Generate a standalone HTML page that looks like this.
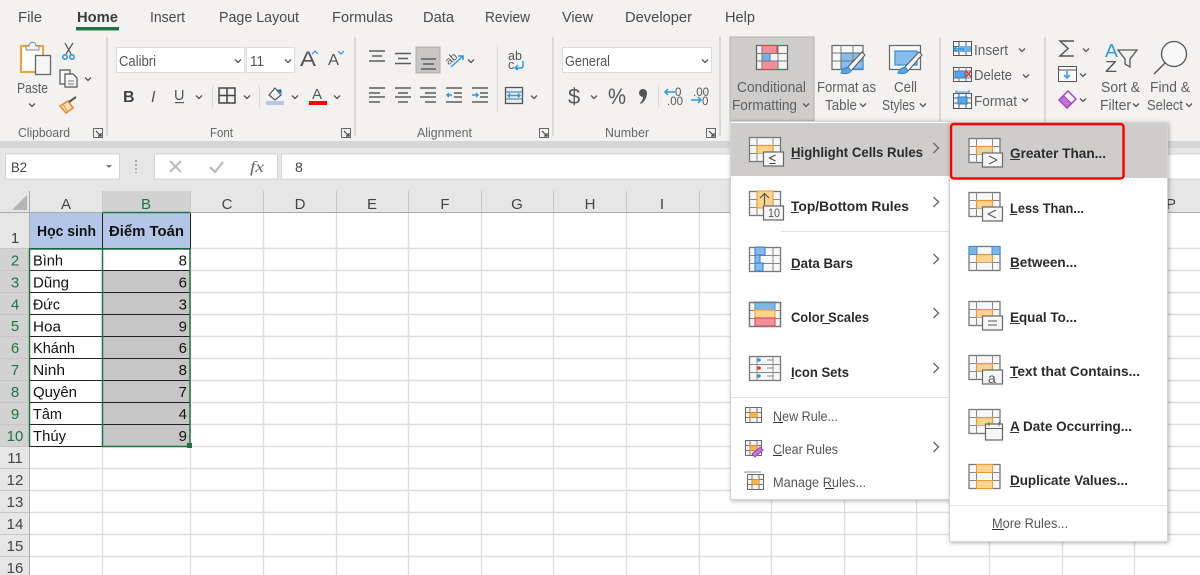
<!DOCTYPE html>
<html lang="vi"><head><meta charset="utf-8"><title>Excel Conditional Formatting</title>
<style>
html,body{margin:0;padding:0;width:1200px;height:575px;overflow:hidden;background:#fff}
svg{display:block}
text{font-family:"Liberation Sans","DejaVu Sans",sans-serif;fill:#4a4a4a;font-size:14.5px}
.r{fill:#5f5f5f;font-size:14.5px}
.l{fill:#666;font-size:13px}
.m{fill:#2b2b2b;font-size:14px;font-weight:bold}
.n{fill:#555;font-size:13.5px}
.c{fill:#111;font-size:15px}
.h{fill:#444;font-size:15px;text-anchor:middle}
.g{fill:#217346;font-size:15px;text-anchor:middle}
.i{fill:none;stroke:#5c5c5c;stroke-width:1.5}
.ch{fill:none;stroke:#555;stroke-width:1.3}
.blue{fill:none;stroke:#2b9be0;stroke-width:1.5}
</style></head><body>
<svg width="1200" height="575" viewBox="0 0 1200 575" xmlns="http://www.w3.org/2000/svg">
<defs>
<path id="v" class="ch" d="M-3,-1.5 L0,1.5 L3,-1.5"/>
<path id="gt" fill="none" stroke="#666" stroke-width="1.4" d="M-2.5,-5 L2.5,0 L-2.5,5"/>
<g id="grid"><rect x=".5" y=".5" width="31" height="24" fill="#f8f8f8" stroke="#777" stroke-width="1.3"/><path fill="none" stroke="#888" d="M8,0V25M24,0V25M0,8.5H32M0,16.5H32"/></g>
<g id="hl"><use href="#grid"/><rect x="8" y="8.5" width="16" height="8" fill="#fad38c"/><path fill="none" stroke="#ec9a35" stroke-width="1.3" d="M8,16V8.5H24V16"/></g>
<rect id="sub" x="0" y="0" width="20" height="14" fill="#f6f6f6" stroke="#666" stroke-width="1.2"/>
<g id="launch"><path fill="none" stroke="#666" d="M-4.5,4.5V-4.5H4.5V4.5H-4.5"/><path fill="none" stroke="#444" stroke-width="1.2" d="M-2,-2L3,3M3,0V3H0"/></g>
<g id="small"><rect x=".5" y=".5" width="16" height="15" fill="#f5f5f5" stroke="#666"/><path fill="none" stroke="#777" d="M5,0V16M12,0V16M0,5.500H17M0,10.500H17"/><rect x="5" y="5.500" width="7" height="5" fill="#f5b452" stroke="#e98f22" stroke-width=".7"/></g>
</defs>

<!-- page bands -->
<rect width="1200" height="141" fill="#f3f2f1"/>
<rect y="141" width="1200" height="7" fill="#d6d6d6"/>
<rect y="148" width="1200" height="43" fill="#e6e6e6"/>

<!-- tabs -->
<text x="18" y="22" textLength="24" lengthAdjust="spacingAndGlyphs">File</text>
<text x="77" y="22" textLength="41" lengthAdjust="spacingAndGlyphs" font-weight="bold" style="fill:#3d3d3d">Home</text>
<rect x="76" y="27" width="43" height="3.500" fill="#217346"/>
<text x="150" y="22" textLength="35" lengthAdjust="spacingAndGlyphs">Insert</text>
<text x="219" y="22" textLength="80" lengthAdjust="spacingAndGlyphs">Page Layout</text>
<text x="332" y="22" textLength="61" lengthAdjust="spacingAndGlyphs">Formulas</text>
<text x="423" y="22" textLength="31" lengthAdjust="spacingAndGlyphs">Data</text>
<text x="485" y="22" textLength="45" lengthAdjust="spacingAndGlyphs">Review</text>
<text x="562" y="22" textLength="31" lengthAdjust="spacingAndGlyphs">View</text>
<text x="625" y="22" textLength="67" lengthAdjust="spacingAndGlyphs">Developer</text>
<text x="725" y="22" textLength="30" lengthAdjust="spacingAndGlyphs">Help</text>

<!-- separators -->
<path stroke="#d2d1d0" stroke-width="1.6" fill="none" d="M107,37V136M355,37V136M553,37V136M720,37V136M940,37V136M1045,37V136"/>
<path stroke="#dcdbda" fill="none" d="M212.500,85V108M259.500,85V108M497.500,45V112M658.500,85V108"/>

<!-- clipboard group -->
<rect x="21" y="46" width="22" height="26" fill="#fff" stroke="#ee9f3e" stroke-width="2"/>
<path d="M26,50V46H29C29,41 36,41 36,46H39V50Z" fill="#f3f2f1" stroke="#8a8a8a"/>
<rect x="35.500" y="55.500" width="15" height="19" fill="#f6f6f6" stroke="#666" stroke-width="1.300"/>
<text class="r" x="17" y="93" textLength="31" lengthAdjust="spacingAndGlyphs">Paste</text>
<use href="#v" x="32" y="105"/>
<path fill="none" stroke="#555" stroke-width="1.200" d="M65,43L71,54M73,43L66,54"/>
<circle cx="65" cy="57" r="2.200" fill="none" stroke="#2b8fd8" stroke-width="1.500"/><circle cx="72" cy="57" r="2.200" fill="none" stroke="#2b8fd8" stroke-width="1.500"/>
<path fill="#f6f6f6" stroke="#555" stroke-width="1.200" d="M60,70H70V84H60Z"/>
<path fill="#f6f6f6" stroke="#555" stroke-width="1.200" d="M65,74H73L77,78V87H65Z"/><path stroke="#777" d="M68,81H74M68,84H74"/>
<use href="#v" x="88" y="79"/>
<path fill="#fbe3c4" stroke="#ed8b1f" stroke-width="1.600" d="M60,106L68,101L73,108L66,113Z"/><path stroke="#ed8b1f" stroke-width="1" d="M63,104L68,112"/>
<path fill="none" stroke="#555" stroke-width="2" d="M69,102L76,97"/>
<text class="l" x="18" y="137" textLength="52" lengthAdjust="spacingAndGlyphs">Clipboard</text>
<use href="#launch" x="98" y="133"/>

<!-- font group -->
<rect x="116.500" y="47.500" width="128" height="25" fill="#fff" stroke="#dcdcdc"/>
<rect x="246.500" y="47.500" width="48" height="25" fill="#fff" stroke="#dcdcdc"/>
<text x="119" y="66" textLength="37" lengthAdjust="spacingAndGlyphs" style="fill:#555">Calibri</text>
<text x="250" y="66" textLength="14" lengthAdjust="spacingAndGlyphs" style="fill:#555">11</text>
<use href="#v" x="238" y="61"/><use href="#v" x="288" y="61"/>
<text x="300" y="66" style="font-size:21px;fill:#555" textLength="16" lengthAdjust="spacingAndGlyphs">A</text>
<path fill="none" stroke="#2b9be0" stroke-width="1.200" d="M312,54L315,51L318,54"/>
<text x="328" y="65" style="font-size:16px;fill:#555" textLength="11" lengthAdjust="spacingAndGlyphs">A</text>
<path fill="none" stroke="#2b9be0" stroke-width="1.200" d="M338,51L341,54L344,51"/>
<text x="123" y="102" font-weight="bold" style="font-size:16px;fill:#444">B</text>
<text x="151" y="102" font-style="italic" style="font-size:16px;fill:#555">I</text>
<text x="174" y="100" style="font-size:14.500px;fill:#555">U</text><rect x="175" y="102" width="9" height="1.200" fill="#555"/>
<use href="#v" x="199" y="97"/>
<path fill="none" stroke="#444" stroke-width="1.500" d="M219,88H235V103H219ZM227,88V103M219,95.500H235"/>
<use href="#v" x="247" y="97"/>
<rect x="266" y="101" width="18" height="4" fill="#b4c7e7"/>
<path fill="#f6f6f6" stroke="#555" stroke-width="1.200" d="M269,95L275,88L281,95L275,100Z"/><path fill="#1f6fb5" d="M277,90l4,-1l1,5z"/>
<use href="#v" x="295" y="97"/>
<text x="312" y="99" style="font-size:15px;fill:#555">A</text>
<rect x="309" y="101" width="18" height="4" fill="#f00"/>
<use href="#v" x="337" y="97"/>
<text class="l" x="210" y="137" textLength="23" lengthAdjust="spacingAndGlyphs">Font</text>
<use href="#launch" x="346" y="133"/>

<!-- alignment -->
<rect x="416" y="47" width="24" height="26" fill="#c8c6c4" stroke="#b0aeac"/>
<path class="i" d="M369,51H385M372,56H382M369,61H385"/>
<path class="i" d="M395,53.500H411M398,58.500H408M395,63.500H411"/>
<path class="i" d="M421,59H436M423,64H434M421,69H436"/>
<path class="i" d="M369,88H385M369,93H380M369,97H385M369,102H380"/>
<path class="i" d="M395,88H411M398,93H408M395,97H411M398,102H408"/>
<path class="i" d="M420,88H436M425,93H436M420,97H436M425,102H436"/>
<path class="i" d="M446,88H462M454,93H462M454,97H462M446,102H462"/>
<path class="blue" d="M452,95H447M449,93L447,95L449,97"/>
<path class="i" d="M472,88H488M480,93H488M480,97H488M472,102H488"/>
<path class="blue" d="M472,95H478M476,93L478,95L476,97"/>
<text x="446" y="62" transform="rotate(-40 452 60)" style="font-size:11px;fill:#555">ab</text>
<path class="blue" d="M451,67L463,56M458,56H463V60"/>
<use href="#v" x="471" y="61"/>
<text x="508" y="60" style="font-size:12.500px;fill:#555">ab</text><text x="508" y="69" style="font-size:12.500px;fill:#555">c</text>
<path class="blue" d="M523,61V66C523,68 521,68 520,68H515M518,65L515,68L518,70"/>
<rect x="505.500" y="87.500" width="17" height="16" fill="#e3f1fb" stroke="#555" stroke-width="1.300"/>
<path stroke="#666" d="M505,92H522M505,99H522" fill="none"/>
<path class="blue" d="M508,95.500H520M510,93.500L508,95.500L510,97.500M518,93.500L520,95.500L518,97.500"/>
<use href="#v" x="534" y="97"/>
<text class="l" x="417" y="137" textLength="55" lengthAdjust="spacingAndGlyphs">Alignment</text>
<use href="#launch" x="544" y="133"/>

<!-- number -->
<rect x="562.500" y="47.500" width="149" height="25" fill="#fff" stroke="#dcdcdc"/>
<text x="565" y="66" textLength="45" lengthAdjust="spacingAndGlyphs" style="fill:#555">General</text>
<use href="#v" x="705" y="61"/>
<text x="568" y="104" style="font-size:22px;fill:#555">$</text>
<use href="#v" x="594" y="97"/>
<text x="608" y="104" style="font-size:22px;fill:#555" textLength="18" lengthAdjust="spacingAndGlyphs">%</text>
<path d="M639,93a4,4 0 1 1 8,0c0,4 -2,8 -6,11l-1,-1c2,-2 3,-4 3,-6c-2,0 -4,-2 -4,-4z" fill="#555"/>
<text x="675" y="96" style="font-size:11.500px;fill:#555">0</text><text x="667" y="105" style="font-size:11.500px;fill:#555">.00</text>
<path class="blue" d="M675,92H665M668,89L665,92L668,95"/>
<text x="693" y="96" style="font-size:11.500px;fill:#555">.00</text><text x="702" y="105" style="font-size:11.500px;fill:#555">0</text>
<path class="blue" d="M691,100H701M698,97L701,100L698,103"/>
<text class="l" x="605" y="137" textLength="44" lengthAdjust="spacingAndGlyphs">Number</text>
<use href="#launch" x="711" y="133"/>

<!-- conditional formatting button -->
<rect x="730" y="37" width="84" height="84" fill="#cfcdcc" stroke="#b5b3b1"/>
<rect x="756.500" y="45.500" width="31" height="24" fill="#f4f4f4" stroke="#666" stroke-width="1.300"/>
<rect x="762" y="45.500" width="15" height="8" fill="#f58e99" stroke="#e03a3a"/>
<rect x="762" y="53.500" width="8" height="7.500" fill="#71b2eb" stroke="#2b80c8"/>
<rect x="762" y="61" width="16" height="8.500" fill="#f58e99" stroke="#e03a3a"/>
<path fill="none" stroke="#777" d="M762,45V69M778,45V69M756,53.500H788M756,61H788"/>
<text class="r" x="737" y="92" textLength="69" lengthAdjust="spacingAndGlyphs">Conditional</text>
<text class="r" x="732" y="110" textLength="65" lengthAdjust="spacingAndGlyphs">Formatting</text>
<use href="#v" x="806" y="105"/>

<!-- format as table / cell styles -->
<rect x="832" y="45.500" width="31" height="24" fill="#f8f8f8" stroke="#666" stroke-width="1.200"/>
<path d="M841,53H863V69H841Z" fill="#86bcee" stroke="#3c8ed6" stroke-width="1.200"/>
<path fill="none" stroke="#777" d="M841,45V69M853,45V69M832,53H863M832,61H863"/>
<path fill="#f6f6f6" stroke="#555" d="M847,68L862,52L865,55L851,71Z"/><path fill="#5aa5e6" stroke="#2b80c8" d="M841,73c2,-5 5,-6 8,-5l2,3c-2,3 -6,3 -10,2z"/>
<text class="r" x="817" y="92" textLength="59" lengthAdjust="spacingAndGlyphs">Format as</text>
<text class="r" x="825" y="110" textLength="32" lengthAdjust="spacingAndGlyphs">Table</text>
<use href="#v" x="863" y="105"/>
<rect x="889.500" y="45.500" width="31" height="24" fill="#f8f8f8" stroke="#666" stroke-width="1.200"/>
<rect x="895" y="51" width="22" height="14" fill="#86bcee" stroke="#3c8ed6" stroke-width="1.200"/>
<path fill="#f6f6f6" stroke="#555" d="M904,68L919,52L922,55L908,71Z"/><path fill="#5aa5e6" stroke="#2b80c8" d="M898,73c2,-5 5,-6 8,-5l2,3c-2,3 -6,3 -10,2z"/>
<text class="r" x="894" y="92" textLength="23" lengthAdjust="spacingAndGlyphs">Cell</text>
<text class="r" x="882" y="110" textLength="33" lengthAdjust="spacingAndGlyphs">Styles</text>
<use href="#v" x="923" y="105"/>

<!-- insert delete format -->
<g fill="none" stroke="#555">
<rect x="953.500" y="41.500" width="18" height="14" fill="#f8f8f8"/><path d="M959,41V55M966,41V55M953,46.500H972M953,51H972"/>
<rect x="953.500" y="67.500" width="18" height="14" fill="#f8f8f8"/><path d="M959,67V81M966,67V81M953,71H972M953,78H972" stroke="#777"/>
<rect x="953.500" y="93.500" width="18" height="15" fill="#f8f8f8"/><path d="M959,93V108M966,93V108M953,98H972M953,103H972"/>
</g>
<rect x="959" y="46" width="12" height="6" fill="#6db2ec"/><path class="blue" d="M964,49H954M957,46.500L954,49L957,51.500"/>
<rect x="955" y="71" width="10" height="7" fill="#5aa5e6" stroke="#2b80c8"/><path fill="none" stroke="#e33" stroke-width="1.500" d="M966,71L971,77M971,71L966,77"/>
<rect x="958" y="97" width="9" height="7" fill="#5aa5e6" stroke="#2b80c8"/><path class="blue" style="stroke-width:1" d="M956,92H969M956,90V94M969,90V94"/>
<text class="r" x="974" y="55" textLength="34" lengthAdjust="spacingAndGlyphs">Insert</text>
<text class="r" x="974" y="80" textLength="38" lengthAdjust="spacingAndGlyphs">Delete</text>
<text class="r" x="974" y="106" textLength="43" lengthAdjust="spacingAndGlyphs">Format</text>
<use href="#v" x="1022" y="50"/><use href="#v" x="1026" y="76"/><use href="#v" x="1025" y="100"/>

<!-- editing -->
<path fill="none" stroke="#555" stroke-width="1.500" d="M1074,41H1060L1068,48.500L1060,56H1074"/>
<use href="#v" x="1086" y="50"/>
<rect x="1058.500" y="66.500" width="18" height="15" fill="#f8f8f8" stroke="#555"/><path stroke="#555" d="M1058,70H1076"/><path class="blue" d="M1067,71V78M1064,75L1067,78L1070,75"/>
<use href="#v" x="1083" y="75"/>
<path d="M1059,100L1068,91L1076,99L1067,108Z" fill="#f6f6f6" stroke="#a23fbf" stroke-width="1.400"/><path d="M1059,100L1064,96L1071,103L1067,108Z" fill="#c274d8" stroke="#a23fbf"/>
<use href="#v" x="1083" y="100"/>
<text x="1105" y="57" style="font-size:18px;fill:#2b9be0" textLength="13" lengthAdjust="spacingAndGlyphs">A</text>
<text x="1105" y="72" style="font-size:16px;fill:#555" textLength="12" lengthAdjust="spacingAndGlyphs">Z</text>
<path fill="none" stroke="#555" stroke-width="1.300" d="M1118,50H1137L1130,59V67L1125,64V59Z"/>
<text class="r" x="1101" y="92" textLength="39" lengthAdjust="spacingAndGlyphs">Sort &amp;</text>
<text class="r" x="1100" y="110" textLength="31" lengthAdjust="spacingAndGlyphs">Filter</text>
<use href="#v" x="1136" y="105"/>
<circle cx="1174" cy="54" r="12.500" fill="#f8f8f8" stroke="#555" stroke-width="1.300"/><path stroke="#555" stroke-width="1.400" d="M1165,63L1154,74"/>
<text class="r" x="1150" y="92" textLength="40" lengthAdjust="spacingAndGlyphs">Find &amp;</text>
<text class="r" x="1147" y="110" textLength="36" lengthAdjust="spacingAndGlyphs">Select</text>
<use href="#v" x="1189" y="105"/>

<!-- formula bar -->
<rect x="5.500" y="154" width="114" height="25" fill="#fff" stroke="#d4d4d4"/>
<text x="11" y="172" style="font-size:14px;fill:#444" textLength="16" lengthAdjust="spacingAndGlyphs">B2</text>
<path d="M106,165h6l-3,3z" fill="#777"/>
<path stroke="#aaa" stroke-width="2" stroke-dasharray="2 2" d="M136,160V173"/>
<rect x="154.500" y="154" width="123" height="25" fill="#fff" stroke="#d4d4d4"/>
<path stroke="#bbb" stroke-width="2" fill="none" d="M170,161L181,172M181,161L170,172"/>
<path stroke="#bbb" stroke-width="2.200" fill="none" d="M210,167L215,172L223,162"/>
<text x="250" y="172" font-style="italic" style="font-family:'Liberation Serif',serif;font-size:16px;fill:#666" textLength="14" lengthAdjust="spacingAndGlyphs">fx</text>
<rect x="281.500" y="154" width="930" height="25" fill="#fff" stroke="#d4d4d4"/>
<text x="295" y="172" style="font-size:14px;fill:#444">8</text>

<!-- headers -->
<rect y="191" width="1200" height="22" fill="#e6e6e6"/>
<rect y="213" width="29" height="362" fill="#e6e6e6"/>
<rect x="103" y="191" width="88" height="21" fill="#d2d2d2"/>
<rect y="249" width="29" height="198" fill="#d2d2d2"/>
<path d="M27,195V210H12Z" fill="#b4b4b4"/>
<path stroke="#ababab" d="M0,212.500H1200M29.500,191V575" fill="none"/>
<path stroke="#c6c6c6" fill="none" d="M102.500,191V212M190.500,191V212M263.500,191V212M336.500,191V212M408.500,191V212M481.500,191V212M553.500,191V212M626.500,191V212M699.500,191V212M771.500,191V212M844.500,191V212M916.500,191V212M989.500,191V212M1062.500,191V212M1134.500,191V212"/>
<text class="h" x="66" y="209">A</text><text class="g" x="146" y="209">B</text><text class="h" x="227" y="209">C</text><text class="h" x="300" y="209">D</text><text class="h" x="372" y="209">E</text><text class="h" x="445" y="209">F</text><text class="h" x="517" y="209">G</text><text class="h" x="590" y="209">H</text><text class="h" x="662" y="209">I</text><text class="h" x="1171" y="209">P</text>
<path stroke="#c6c6c6" fill="none" d="M0,248.500H29M0,270.500H29M0,292.500H29M0,314.500H29M0,336.500H29M0,358.500H29M0,380.500H29M0,402.500H29M0,424.500H29M0,446.500H29M0,468.500H29M0,490.500H29M0,512.500H29M0,534.500H29M0,556.500H29"/>
<text class="h" x="15" y="243">1</text>
<text class="g" x="15" y="265.500">2</text><text class="g" x="15" y="287.500">3</text><text class="g" x="15" y="309.500">4</text><text class="g" x="15" y="331">5</text><text class="g" x="15" y="353">6</text><text class="g" x="15" y="375">7</text><text class="g" x="15" y="397">8</text><text class="g" x="15" y="419">9</text><text class="g" x="15" y="441">10</text>
<text class="h" x="15" y="463">11</text><text class="h" x="15" y="485">12</text><text class="h" x="15" y="507">13</text><text class="h" x="15" y="529">14</text><text class="h" x="15" y="551">15</text><text class="h" x="15" y="573">16</text>

<!-- grid -->
<path stroke="#dedede" stroke-width="1.400" fill="none" d="M102.500,447V575M190.500,213V575M263.500,213V575M336.500,213V575M408.500,213V575M481.500,213V575M553.500,213V575M626.500,213V575M699.500,213V575M771.500,213V575M844.500,213V575M916.500,213V575M989.500,213V575M1062.500,213V575M1134.500,213V575
M191,248.500H1200M191,270.500H1200M191,292.500H1200M191,314.500H1200M191,336.500H1200M191,358.500H1200M191,380.500H1200M191,402.500H1200M191,424.500H1200M30,446.500H1200M30,468.500H1200M30,490.500H1200M30,512.500H1200M30,534.500H1200M30,556.500H1200"/>

<!-- cells -->
<rect x="30" y="213" width="161" height="36" fill="#b4c6e7"/>
<rect x="103" y="271" width="87" height="176" fill="#c6c6c6"/>
<path stroke="#222" fill="none" d="M30,248.500H190M102.500,213V249M190.500,213V249M30,270.500H190M30,292.500H190M30,314.500H190M30,336.500H190M30,358.500H190M30,380.500H190M30,402.500H190M30,424.500H190M30,446.500H103"/>
<text x="37" y="236" font-weight="bold" style="fill:#111;font-size:14.500px" textLength="59" lengthAdjust="spacingAndGlyphs">Học sinh</text>
<text x="109" y="236" font-weight="bold" style="fill:#111;font-size:14.500px" textLength="75" lengthAdjust="spacingAndGlyphs">Điểm Toán</text>
<text class="c" x="33" y="265.500" textLength="30" lengthAdjust="spacingAndGlyphs">Bình</text>
<text class="c" x="33" y="287.500" textLength="36" lengthAdjust="spacingAndGlyphs">Dũng</text>
<text class="c" x="33" y="309.500" textLength="27" lengthAdjust="spacingAndGlyphs">Đức</text>
<text class="c" x="33" y="331.500" textLength="28" lengthAdjust="spacingAndGlyphs">Hoa</text>
<text class="c" x="33" y="353" textLength="42" lengthAdjust="spacingAndGlyphs">Khánh</text>
<text class="c" x="33" y="375" textLength="32" lengthAdjust="spacingAndGlyphs">Ninh</text>
<text class="c" x="33" y="397" textLength="44" lengthAdjust="spacingAndGlyphs">Quyên</text>
<text class="c" x="33" y="419" textLength="29" lengthAdjust="spacingAndGlyphs">Tâm</text>
<text class="c" x="33" y="441" textLength="33" lengthAdjust="spacingAndGlyphs">Thúy</text>
<g text-anchor="end"><text class="c" x="187" y="265.500">8</text><text class="c" x="187" y="287.500">6</text><text class="c" x="187" y="309.500">3</text><text class="c" x="187" y="331.500">9</text><text class="c" x="187" y="353">6</text><text class="c" x="187" y="375">8</text><text class="c" x="187" y="397">7</text><text class="c" x="187" y="419">4</text><text class="c" x="187" y="441">9</text></g>
<path stroke="#217346" stroke-width="1.500" fill="none" d="M102.500,249V446.500H190V249H29.500V447M102.500,212.500H190"/>
<rect x="187" y="443" width="5" height="5" fill="#217346"/>

<!-- menu 1 -->
<g style="filter:drop-shadow(1px 1px 2px rgba(0,0,0,.3))">
<rect x="730.500" y="121.500" width="219" height="378" fill="#fff" stroke="#d4d4d4"/>
</g>
<rect x="731" y="123" width="218" height="53" fill="#cfcdcc"/>
<path stroke="#e3e3e3" fill="none" d="M781,231.500H949M731,397.500H949"/>
<use href="#hl" x="749" y="137"/><use href="#sub" x="763.500" y="152"/>
<path fill="none" stroke="#444" d="M775.500,155L769.500,158L775.500,161M769.500,163.500H775.500"/>
<use href="#hl" x="749" y="191"/><rect x="757" y="191" width="16" height="17" fill="#fad38c" stroke="#ec9a35"/>
<path fill="none" stroke="#555" stroke-width="1.200" d="M764.500,205V194M760,198L764.500,193.500L769,198"/>
<use href="#sub" x="763.500" y="206"/>
<text x="768" y="217" style="font-size:12px;fill:#555" textLength="12" lengthAdjust="spacingAndGlyphs">10</text>
<use href="#grid" x="749" y="247"/><rect x="755" y="247" width="10" height="8" fill="#85baeb" stroke="#2b80c8"/><rect x="755" y="255" width="5" height="8" fill="#85baeb" stroke="#2b80c8"/><rect x="755" y="263" width="8" height="8" fill="#85baeb" stroke="#2b80c8"/>
<use href="#grid" x="749" y="302"/><rect x="755" y="302" width="20" height="8" fill="#7fb6ea" stroke="#3c8ed6"/><rect x="755" y="310" width="20" height="8" fill="#fad38c" stroke="#ec9a35"/><rect x="755" y="318" width="20" height="8" fill="#f58e99" stroke="#e03a3a"/><rect x="749.500" y="302.500" width="31" height="24" fill="none" stroke="#777" stroke-width="1.300"/>
<use href="#grid" x="749" y="356"/><circle cx="759" cy="360" r="1.800" fill="#2b9be0"/><circle cx="759" cy="368" r="1.800" fill="#e33"/><circle cx="759" cy="376" r="1.800" fill="#2b9be0"/><path stroke="#888" d="M767,360H773M767,368H773M767,376H773"/>
<use href="#small" x="745" y="407"/>
<use href="#small" x="745" y="440"/><path d="M752,454L760,447L763,450L755,457Z" fill="#c274d8" stroke="#a23fbf"/>
<path fill="none" stroke="#888" d="M745,473V472H761"/><use href="#small" x="747" y="474"/>
<text class="m" x="791" y="157" textLength="132" lengthAdjust="spacingAndGlyphs">Highlight Cells Rules</text>
<text class="m" x="791" y="211" textLength="118" lengthAdjust="spacingAndGlyphs">Top/Bottom Rules</text>
<text class="m" x="791" y="268" textLength="62" lengthAdjust="spacingAndGlyphs">Data Bars</text>
<text class="m" x="791" y="322" textLength="78" lengthAdjust="spacingAndGlyphs">Color Scales</text>
<text class="m" x="791" y="377" textLength="58" lengthAdjust="spacingAndGlyphs">Icon Sets</text>
<text class="n" x="773" y="421" textLength="65" lengthAdjust="spacingAndGlyphs">New Rule...</text>
<text class="n" x="773" y="454" textLength="65" lengthAdjust="spacingAndGlyphs">Clear Rules</text>
<text class="n" x="773" y="487" textLength="93" lengthAdjust="spacingAndGlyphs">Manage Rules...</text>
<path stroke="#333" fill="none" d="M791,158.500H800M791,212.500H799M791,269.500H800M822,323.500H830M791,378.500H794M773,422.500H783M773,455.500H782M825,488.500H834"/>
<use href="#gt" x="936" y="148"/><use href="#gt" x="936" y="202"/><use href="#gt" x="936" y="259"/><use href="#gt" x="936" y="313"/><use href="#gt" x="936" y="368"/><use href="#gt" x="936" y="447"/>

<!-- menu 2 -->
<g style="filter:drop-shadow(1px 1px 2px rgba(0,0,0,.3))">
<rect x="949.500" y="122.500" width="218" height="419" fill="#fff" stroke="#d4d4d4"/>
</g>
<rect x="950" y="123" width="217" height="55" fill="#cfcdcc"/>
<path stroke="#e3e3e3" fill="none" d="M950,505.500H1167"/>
<use href="#hl" x="968.500" y="138"/><use href="#sub" x="982.500" y="153"/><path fill="none" stroke="#555" d="M989,156L997,160L989,164"/>
<use href="#hl" x="968.500" y="192"/><use href="#sub" x="982.500" y="207"/><path fill="none" stroke="#555" d="M996,210L988,214L996,218"/>
<use href="#hl" x="968.500" y="246"/><rect x="969" y="246.500" width="8" height="8" fill="#7fb6ea" stroke="#3c8ed6"/><rect x="992" y="246.500" width="8" height="8" fill="#7fb6ea" stroke="#3c8ed6"/>
<use href="#hl" x="968.500" y="301"/><use href="#sub" x="982.500" y="316"/><path fill="none" stroke="#555" d="M988,321H997M988,325H997"/>
<use href="#hl" x="968.500" y="355"/><use href="#sub" x="982.500" y="370"/><text x="988" y="383" style="font-size:14px;fill:#555">a</text>
<use href="#hl" x="968.500" y="409"/><rect x="985.500" y="424" width="17" height="16" fill="#f6f6f6" stroke="#666" stroke-width="1.200"/><path fill="none" stroke="#666" d="M985,428.500H1003M989,422V426M999,422V426"/>
<use href="#grid" x="968.500" y="464"/><rect x="976.500" y="464.500" width="16" height="8" fill="#fad38c" stroke="#ec9a35"/><rect x="976.500" y="480.500" width="16" height="8" fill="#fad38c" stroke="#ec9a35"/>
<text class="m" x="1010" y="158" textLength="96" lengthAdjust="spacingAndGlyphs">Greater Than...</text>
<text class="m" x="1010" y="213" textLength="74" lengthAdjust="spacingAndGlyphs">Less Than...</text>
<text class="m" x="1010" y="267" textLength="67" lengthAdjust="spacingAndGlyphs">Between...</text>
<text class="m" x="1010" y="322" textLength="67" lengthAdjust="spacingAndGlyphs">Equal To...</text>
<text class="m" x="1010" y="376" textLength="130" lengthAdjust="spacingAndGlyphs">Text that Contains...</text>
<text class="m" x="1010" y="431" textLength="122" lengthAdjust="spacingAndGlyphs">A Date Occurring...</text>
<text class="m" x="1010" y="485" textLength="118" lengthAdjust="spacingAndGlyphs">Duplicate Values...</text>
<text class="n" x="992" y="528" textLength="76" lengthAdjust="spacingAndGlyphs">More Rules...</text>
<path stroke="#333" fill="none" d="M1010,159.500H1020M1010,214.500H1017M1010,268.500H1019M1010,323.500H1020M1010,377.500H1018M1010,432.500H1019M1010,486.500H1020M992,529.500H1004"/>
<rect x="951" y="124" width="172.500" height="54.500" rx="3" fill="none" stroke="#f00" stroke-width="2.500"/>
</svg>
</body></html>
